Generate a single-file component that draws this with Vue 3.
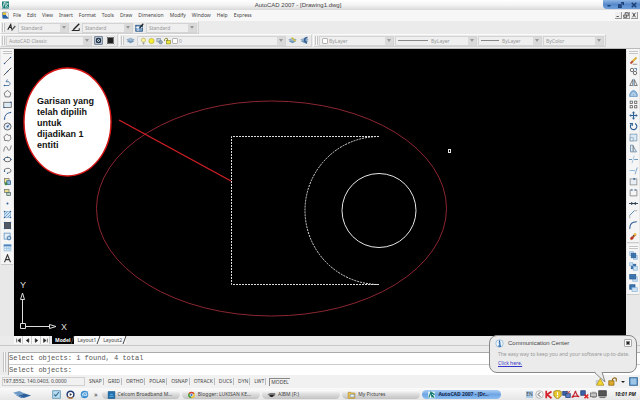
<script setup>
const menus = ['File', 'Edit', 'View', 'Insert', 'Format', 'Tools', 'Draw', 'Dimension', 'Modify', 'Window', 'Help', 'Express']

const blue = '#2d5f96'
const sky = '#8db8dc'
const ink = '#555'

const line = (d, c = ink, w = 1) => `<path d="${d}" fill="none" stroke="${c}" stroke-width="${w}"/>`
const box = (x, y, w, h, f = 'none', s = ink) => `<rect x="${x}" y="${y}" width="${w}" height="${h}" fill="${f}" stroke="${s}"/>`
const dot = (x, y, c = blue, r = 1) => `<circle cx="${x}" cy="${y}" r="${r}" fill="${c}"/>`

const drawTools = [
  { name: 'Line', art: line('M2 10 10 2') + dot(2, 10) + dot(10, 2) },
  { name: 'Construction Line', art: line('M1 11 11 1', ink, 1.3) + dot(6, 6) },
  { name: 'Polyline', art: line('M1 10H8A3 3 0 0 0 8 5H4L6 2', blue) + dot(2, 10) },
  { name: 'Polygon', art: line('M6 2 10.5 5.5 9 10.5H3L1.500 5.500Z') },
  { name: 'Rectangle', art: box(1, 3, 10, 7, '#dbe9f5') + dot(1.5, 10) + dot(10.5, 3) },
  { name: 'Arc', art: line('M2 11Q2 3 10 2', blue, 1.2) + dot(2, 10.5) + dot(10, 2) },
  { name: 'Circle', art: '<circle cx="6" cy="6" r="4.700" fill="#e4edf5" stroke="#444"/>' + line('M6 6 9 3', blue) + dot(6, 6, blue, 1.4) },
  { name: 'Revision Cloud', art: line('M3 3Q5 0 7 3Q11 2 10 5Q12 8 9 9Q8 12 5 10Q1 11 2 8Q0 5 3 3Z') },
  { name: 'Spline', art: line('M1 10C2 1 5 3 6 6S9 11 11 2') },
  { name: 'Ellipse', art: '<ellipse cx="6" cy="6" rx="4.600" ry="3" fill="none" stroke="#444"/>' + dot(1.5, 6) + dot(10.5, 6) + dot(6, 3) },
  { name: 'Ellipse Arc', art: line('M2 7A4.500 3 0 1 1 7 9') + dot(2, 7) + dot(6, 9.5) },
  { name: 'Insert Block', art: box(2, 2, 6, 6, '#f2e58a', '#777') + box(5, 5, 5, 5, sky, blue) + dot(4, 9, '#3f8a45', 2) },
  { name: 'Make Block', art: box(2, 2, 6, 4, '#e6dc88', '#777') + box(5, 6, 5, 4, '#b9d6b5', '#567') },
  { name: 'Point', art: dot(6, 6, blue, 1.3) },
  { name: 'Hatch', art: box(2, 2, 8, 8, '#cfe2f2', sky) + line('M2 6 6 2M2 10 10 2M6 10 10 6', '#5c8fc0') + dot(2, 2) + dot(10, 2) + dot(2, 10) + dot(10, 10) },
  { name: 'Gradient', art: box(2, 2, 8, 8, '#505a68', '#333') + dot(2, 2) + dot(10, 2) + dot(2, 10) + dot(10, 10) },
  { name: 'Region', art: box(1.5, 1.5, 8, 8, '#e3eef8', '#5c8fc0') + '<circle cx="8" cy="8" r="2.500" fill="#bcd6ea" stroke="#2d5f96"/>' },
  { name: 'Table', art: box(1.5, 2.5, 9, 8, '#eaf3fb', sky) + '<rect x="1" y="2" width="10" height="2.500" fill="#4d86bd"/>' + line('M2 7H10M5 4V10M8 4V10', sky) },
  { name: 'Multiline Text', art: line('M2 11 6 1 10 11M3.500 7.500H8.500', '#333', 1.4) }
]

const modifyTools = [
  { name: 'Erase', art: line('M4 8 10 2', '#d8b13c', 2.6) + line('M2 10 5 7', '#c24a3a', 2.4) + line('M5 11H11', '#777') },
  { name: 'Copy', art: '<circle cx="4" cy="4" r="2.300" fill="none" stroke="#444"/><circle cx="8" cy="8" r="2.300" fill="none" stroke="#444"/>' + line('M7 2H10V5', blue) },
  { name: 'Mirror', art: line('M5 2V10H1ZM7 2V10H11Z', ink) + line('M6 1V11', sky) },
  { name: 'Offset', art: '<path d="M1 10V7Q3 2 6 2T11 7V10Z" fill="#8db8dc" stroke="#5c8fc0"/>' + line('M4 10V7Q6 3 8 7V10', '#eee') },
  { name: 'Array', art: box(1.5, 1.5, 3, 3) + box(7.5, 1.5, 3, 3) + box(1.5, 7.5, 3, 3) + box(7.5, 7.5, 3, 3) },
  { name: 'Move', art: line('M6 1V11M1 6H11', blue, 1.5) + line('M4.500 3 6 1 7.500 3M4.500 9 6 11 7.500 9M3 4.500 1 6 3 7.500M9 4.500 11 6 9 7.500', blue) },
  { name: 'Rotate', art: line('M3 3A4.300 4.300 0 1 0 8 2M1 2H4.500V5', blue, 1.5) },
  { name: 'Scale', art: box(1.5, 1.5, 9, 9, '#dceaf5', '#7a99b5') + box(1.5, 6.5, 4, 4, '#f8f8f8', '#7a99b5') },
  { name: 'Stretch', art: '<path d="M2 1.500H5L10 10.500H2Z" fill="#dceaf5" stroke="#60809c"/>' + line('M5.500 2V10') },
  { name: 'Trim', art: line('M7 1 4 11', sky) + line('M0 6H4M7 6H12', '#6c93b8', 1.3) },
  { name: 'Extend', art: line('M11 2 8 11', '#5c8fc0') + line('M1 6H8', sky, 1.3) },
  { name: 'Break at Point', art: box(1.5, 2.5, 9, 8, '#e8eef3', '#888') + dot(7, 2.5, blue, 1.3) },
  { name: 'Break', art: line('M4 2.500H1.500V10.500H10.500V2.500H8', '#777') + dot(4, 2.5) + dot(8, 2.5) },
  { name: 'Join', art: line('M0 6H12', '#345', 1.3) + line('M3 4 5 6 3 8M9 4 7 6 9 8', '#234', 1.3) },
  { name: 'Chamfer', art: line('M1 11V7L7 1H11', '#999') + line('M1 7 7 1', '#5c8fc0', 1.3) },
  { name: 'Fillet', art: line('M1 11V9M9 1H11', '#999') + line('M1 10Q1 1 10 1', blue, 1.5) },
  { name: 'Explode', art: line('M2 10 9 3', '#d66f35', 2.5) + dot(4, 8, '#b6342b', 2) + dot(8, 3, '#e5bf4d', 1.8) + dot(6, 5, '#345', 1) }
]

const orderTools = [
  { name: 'Bring to Front', art: box(1, 1, 5, 5, '#cfe2f2', sky) + box(6, 6, 5, 5, '#cfe2f2', sky) + box(3, 3, 6, 6, '#3b73ac', blue) },
  { name: 'Send to Back', art: box(3, 3, 6, 6, '#3b73ac', blue) + box(1, 1, 4, 4, '#cfe2f2', sky) + box(6, 6, 5, 5, '#cfe2f2', sky) },
  { name: 'Bring Above Objects', art: box(5, 5, 6, 6, '#cfe2f2', sky) + box(1, 2, 8, 6, '#3b73ac', blue) },
  { name: 'Send Under Objects', art: box(1, 1, 7, 6, '#3b73ac', blue) + box(4, 5, 7, 5, '#cfe2f2', sky) }
]

const styleCombos = [
  { name: 'Text style', art: line('M1 9 5 2 6 8M3 6H6', '#222', 1.5) + line('M6 10 11 4', '#555', 1.7) },
  { name: 'Dimension style', art: line('M1 10H11V7', '#222', 1.3) + line('M3 9 11 1', '#222', 2) },
  { name: 'Table style', art: box(1, 3, 9, 8, '#7aa3cd', '#24507f') + line('M1 6H10M4 4V11', '#fff') + line('M6 7 11 1', '#222', 1.6) }
]

const layers = '<path d="M1 7 6 5 11 7 6 9.500Z" fill="#7298bd"/><path d="M1 5 6 3 11 5 6 7.500Z" fill="#9dbad4" stroke="#557799" stroke-width=".5"/>'
const art = {
  gear: box(1, 1, 10, 10, '#c6d4e4', '#456') + '<circle cx="6" cy="6" r="2.800" fill="none" stroke="#234" stroke-width="1.500"/>' + line('M3 3 9 9M9 3 3 9', '#345'),
  space: box(2.5, 2.5, 7, 7, '#222', '#222') + line('M1 1 3 3M11 1 9 3M1 11 3 9M11 11 9 9', '#555'),
  layers,
  layerState: layers + line('M5 2 10 7', '#d5c43d', 2),
  layerPrev: layers + line('M10 2A4 4 0 0 0 6 6L9 10', '#315f91', 2),
  bulb: '<circle cx="6" cy="4.500" r="3.500" fill="#fff7a0" stroke="#a59b42"/>' + line('M4.500 9.500H7.500M5 11H7', '#555'),
  sun: '<circle cx="6" cy="6" r="4.500" fill="#f5ee36" stroke="#aaa13a"/>',
  freeze: box(1.5, 1.5, 6, 6, '#c2cfda', '#789') + '<circle cx="8" cy="8" r="3" fill="#93a9bb" stroke="#678"/>',
  lock: box(4, 5, 7, 6, '#e9e33a', '#888527') + line('M1 6V3Q3 0 6 2V6', '#888527', 1.5),
  swatch: box(1.5, 1.5, 9, 9, '#fff', '#777')
}

const lineCombos = [
  { name: 'Color', text: 'ByLayer', kind: 'color', cls: 'w-color' },
  { name: 'Linetype', text: 'ByLayer', kind: 'long', cls: 'w-type' },
  { name: 'Lineweight', text: 'ByLayer', kind: 'short', cls: 'w-weight' },
  { name: 'Plot style', text: 'ByColor', kind: '', cls: 'w-plot' }
]

const note = ['Garisan yang', 'telah dipilih', 'untuk', 'dijadikan 1', 'entiti']
const tabNav = [
  { name: 'First', d: 'M1 1V7M7 1V7L3 4Z' },
  { name: 'Previous', d: 'M6 1V7L2 4Z' },
  { name: 'Next', d: 'M2 1V7L6 4Z' },
  { name: 'Last', d: 'M7 1V7M1 1V7L5 4Z' }
]
const toggles = ['SNAP', 'GRID', 'ORTHO', 'POLAR', 'OSNAP', 'OTRACK', 'DUCS', 'DYN', 'LWT', 'MODEL']

const ie = '<circle cx="6" cy="6" r="5" fill="#3d8fd0"/><path d="M9 7H3.500A2.700 2.700 0 1 1 9 6Z" fill="none" stroke="#fff" stroke-width="1.200"/><path d="M1 10Q7 6 11 1" fill="none" stroke="#7fc0ec" stroke-width="1.300"/>'
const quick = [
  { name: 'Show Desktop', art: box(1, 1, 10, 10, '#b9dcf0', '#4b88ad') + line('M3 6 5 8 9 3', '#2f6488', 1.5) },
  { name: 'Media Player', art: '<circle cx="6" cy="6" r="4.500" fill="#fff" stroke="#263c78" stroke-width="2"/><path d="M5 4 8 6 5 8Z" fill="#333"/><path d="M2 9A5 5 0 0 0 9 10" fill="none" stroke="#d9832e" stroke-width="1.500"/>' },
  { name: 'Internet Explorer', art: ie }
]
const tasks = [
  { text: 'Celcom Broadband M...', art: box(1, 1, 10, 10, '#1f6fae', '#15588f') + line('M3 8H9M4 5H8', '#8fd0f5') },
  { text: 'Blogger: LUKISAN KE...', art: '<circle cx="6" cy="6" r="5" fill="#e8c22e"/><path d="M6 6 1.700 3.500A5 5 0 0 1 10.300 3.500Z" fill="#d63a2e"/><path d="M6 6 1.700 3.500A5 5 0 0 0 5.500 11Z" fill="#3a9a48"/><circle cx="6" cy="6" r="2.200" fill="#3b78d0" stroke="#fff"/>' },
  { text: 'AIBM (F:)', art: '<path d="M0 5 4 3H11L12 6 8 9H4Z" fill="#777"/><path d="M3 6H10L7 9H5Z" fill="#222"/>' },
  { text: 'My Pictures', art: '<path d="M1 2H5L6 3H11V11H1Z" fill="#efc64f" stroke="#b38a2b"/><path d="M4 5H10V9H4Z" fill="#f6f6f6" stroke="#6b8fb5"/>' },
  { text: 'AutoCAD 2007 - [Dr...', active: true, art: '<path d="M1 1H11V11H1Z" fill="#e5f6f3"/>' + line('M2 10 5 2 7 10M6 2 10 5 7 7 10 10', '#11756c', 1.6) }
]
const tray = [
  { name: 'Show icons', art: '<circle cx="6" cy="6" r="5" fill="#f4f4f4" stroke="#aaa"/>' + line('M7 3 4 6 7 9', '#555', 1.3) },
  { name: 'Antivirus', art: line('M3 1V11M10 2 4 6 10 11', '#d4202a', 2.3) },
  { name: 'Security', art: '<path d="M6 0 11 2V7Q10 10 6 12 2 10 1 7V2Z" fill="#e7c72f" stroke="#947e20"/>' + line('M6 3V7M6 8V10', '#fff', 1.5) },
  { name: 'Network', art: box(1, 2, 6, 5, '#3d62a8', '#223e74') + box(5, 5, 6, 5, '#5a7fc0', '#223e74') + line('M7 1 11 5M11 1 7 5', '#c33') },
  { name: 'Reader', art: line('M1 10Q5 6 6 1Q7 7 11 9Q6 7 1 10', '#c4222c', 1.6) },
  { name: 'Connection', art: box(1, 1, 6, 6, '#3d62a8', '#223e74') + line('M6 6 11 11M11 6 6 11', '#d22', 2) },
  { name: 'Hardware', art: box(2, 4, 8, 5, '#c5c5c5', '#666') + line('M4 3H9M4 10H9', '#888') },
  { name: 'Display', art: box(1, 1, 10, 7, '#555', '#333') + line('M2 10H10', '#777', 1.5) }
]
</script>

<template>
  <div class="app">
    <header class="title-bar">
      <svg class="app-icon" viewBox="0 0 12 12"><rect width="12" height="12" fill="#167b74" /><path d="M1 11 4 1 7 11M5 2 11 4 7 6 11 11" fill="none" stroke="#e4f5f2" stroke-width="1.3" /></svg>
      <h1>AutoCAD 2007 - [Drawing1.dwg]</h1>
      <div class="window-buttons">
        <button aria-label="Minimize"><svg viewBox="0 0 8 8"><path d="M2 5H6" /></svg></button>
        <button aria-label="Restore"><svg viewBox="0 0 8 8"><path d="M1 4H4V7H1ZM4 1H7V4" /></svg></button>
        <button aria-label="Close"><svg viewBox="0 0 8 8"><path d="M1 1 7 7M7 1 1 7" /></svg></button>
      </div>
    </header>

    <nav class="menu-bar">
      <svg class="doc-icon" viewBox="0 0 12 12"><path d="M2 0H9L11 2V11H2Z" fill="#f3f3f3" stroke="#999" /><path d="M0 1H7V6L12 11H1Z" fill="#2864a8" /><path d="M1 1H7V5H1Z" fill="#eec43a" /></svg>
      <button v-for="m in menus" :key="m">{{ m }}</button>
      <div class="doc-buttons">
        <button aria-label="Minimize drawing"><svg viewBox="0 0 8 8"><path d="M2 6H5" /></svg></button>
        <button aria-label="Restore drawing"><svg viewBox="0 0 8 8"><path d="M1 4H5V7H1ZM3 3V1H7V5H6" /></svg></button>
        <button aria-label="Close drawing"><svg viewBox="0 0 8 8"><path d="M2 1 6 7M6 1 2 7" /></svg></button>
      </div>
    </nav>

    <div class="toolbar styles">
      <div class="group">
        <i class="grip"></i>
        <template v-for="c in styleCombos" :key="c.name">
          <button class="tool" :aria-label="c.name"><svg viewBox="0 0 12 12" v-html="c.art" /></button>
          <div class="combo w-style">
            <select :aria-label="c.name"><option>Standard</option></select>
            <i class="arrow"></i>
          </div>
        </template>
      </div>
    </div>

    <div class="toolbar properties">
      <div class="group">
        <i class="grip"></i>
        <div class="combo w-space">
          <select aria-label="Workspace"><option>AutoCAD Classic</option></select>
          <i class="arrow"></i>
        </div>
        <button class="tool" aria-label="Workspace settings"><svg viewBox="0 0 12 12" v-html="art.gear" /></button>
        <button class="tool" aria-label="My workspace"><svg viewBox="0 0 12 12" v-html="art.space" /></button>
      </div>
      <div class="group">
        <i class="grip"></i>
        <button class="tool" aria-label="Layer properties"><svg viewBox="0 0 12 12" v-html="art.layers" /></button>
        <div class="combo w-layer">
          <svg viewBox="0 0 12 12" v-html="art.bulb" />
          <svg viewBox="0 0 12 12" v-html="art.sun" />
          <svg viewBox="0 0 12 12" v-html="art.freeze" />
          <svg viewBox="0 0 12 12" v-html="art.lock" />
          <svg class="small" viewBox="0 0 12 12" v-html="art.swatch" />
          <select aria-label="Layer"><option>0</option></select>
          <i class="arrow"></i>
        </div>
        <button class="tool" aria-label="Make object's layer current"><svg viewBox="0 0 12 12" v-html="art.layerState" /></button>
        <button class="tool" aria-label="Layer previous"><svg viewBox="0 0 12 12" v-html="art.layerPrev" /></button>
      </div>
      <div class="group">
        <i class="grip"></i>
        <div v-for="c in lineCombos" :key="c.name" class="combo" :class="c.cls">
          <svg v-if="c.kind === 'color'" class="small" viewBox="0 0 12 12" v-html="art.swatch" />
          <i v-else-if="c.kind" class="sample" :class="c.kind"></i>
          <select :aria-label="c.name"><option>{{ c.text }}</option></select>
          <i class="arrow"></i>
        </div>
      </div>
    </div>

    <main class="workspace">
      <aside class="rail">
        <div class="palette">
          <i class="grip flat"></i>
          <button v-for="t in drawTools" :key="t.name" :aria-label="t.name"><svg viewBox="0 0 12 12" v-html="t.art" /></button>
        </div>
      </aside>

      <div class="canvas">
        <svg viewBox="14 49 612 287" preserveAspectRatio="xMinYMin meet">
          <ellipse cx="271.5" cy="208.5" rx="175" ry="107.5" class="outline" />
          <path d="M379 136.5H231.5V284.5H379" class="picked" />
          <path d="M379 136.5A74 74 0 0 0 379 284.5" class="picked" />
          <circle cx="379" cy="210.500" r="37" class="solid" />
          <path d="M119 120 231 181" class="leader" />
          <ellipse cx="67.500" cy="122" rx="43.500" ry="54" class="callout" />
          <text v-for="(t, i) in note" :key="t" x="37" :y="104 + i * 11" class="note">{{ t }}</text>
          <rect x="448.5" y="149.5" width="2" height="3" class="solid" />
          <g class="axes">
            <path d="M20.500 323.500H25.500V328.500H20.500ZM25.500 326.500H49.500M22.500 323.500V299.500M49.500 324.500 56 326.500 49.500 328.500ZM20.500 299.500 22.500 293 24.500 299.500Z" />
            <text x="61" y="330">X</text>
            <text x="20" y="288">Y</text>
          </g>
        </svg>
      </div>

      <aside class="rail">
        <div class="palette">
          <i class="grip flat"></i>
          <button v-for="t in modifyTools" :key="t.name" :aria-label="t.name"><svg viewBox="0 0 12 12" v-html="t.art" /></button>
        </div>
        <div class="palette">
          <i class="grip flat"></i>
          <button v-for="t in orderTools" :key="t.name" :aria-label="t.name"><svg viewBox="0 0 12 12" v-html="t.art" /></button>
        </div>
      </aside>
    </main>

    <div class="layout-tabs">
      <button v-for="n in tabNav" :key="n.name" class="tab-nav" :aria-label="n.name"><svg viewBox="0 0 8 8"><path :d="n.d" /></svg></button>
      <button class="tab current">Model</button>
      <button class="tab">Layout1</button>
      <button class="tab">Layout2</button>
    </div>

    <section class="command">
      <i class="grip"></i>
      <div class="lines">
        <p>Select objects: 1 found, 4 total</p>
        <div class="prompt">
          <label for="cmd">Select objects:</label>
          <input id="cmd" type="text" />
        </div>
      </div>
    </section>

    <footer class="status">
      <output class="coords">197.8552, 140.0403, 0.0000</output>
      <button v-for="t in toggles" :key="t" :class="{ on: t === 'MODEL' }">{{ t }}</button>
      <div class="status-icons">
        <svg viewBox="0 0 12 12"><path d="M1 4H8V10H1Z" fill="#c6ccd3" /><path d="M7 2 12 11H2Z" fill="#f2d52e" stroke="#ab9021" /></svg>
        <svg viewBox="0 0 12 12"><path d="M1 5H8V11H1Z" fill="#dca92d" stroke="#8e6814" /><path d="M6 5V3Q8 0 11 2V6" fill="none" stroke="#8e6814" stroke-width="1.500" /></svg>
        <i class="caret"></i>
        <svg viewBox="0 0 12 12"><path d="M1 1H11V11H1Z" fill="#9cc5e6" stroke="#2b6196" stroke-width="1.500" /></svg>
      </div>

      <section class="balloon">
        <header>
          <svg viewBox="0 0 12 12"><circle cx="6" cy="6" r="5" fill="#e9f2fa" stroke="#8fb3d2" /><path d="M6 2V4M5 5H6.500V9M4.500 9.500H8" fill="none" stroke="#1d5fa6" stroke-width="1.500" /></svg>
          <h2>Communication Center</h2>
          <button aria-label="Close"><svg viewBox="0 0 8 8"><path d="M2 2 6 6M6 2 2 6" /></svg></button>
        </header>
        <p>The easy way to keep you and your software up-to-date.</p>
        <a href="#">Click here.</a>
        <svg class="tail" viewBox="0 0 12 12"><path d="M0 0 11 11 8 0Z" fill="#ebebeb" /><path d="M0 1 11 11 8 1" fill="none" stroke="#888" /></svg>
      </section>
    </footer>

    <div class="taskbar">
      <button class="start" aria-label="Start"><svg viewBox="0 0 20 10"><path d="M0 3 7 1 13 4 6 6Z" fill="#6c98c6" /><path d="M6 6 13 4 20 6 12 9Z" fill="#2a5f9c" /><path d="M2 5 6 6 12 9 9 9Z" fill="#3f77b2" /></svg></button>
      <button v-for="q in quick" :key="q.name" class="quick" :aria-label="q.name"><svg viewBox="0 0 12 12" v-html="q.art" /></button>
      <span class="more">»</span>
      <div class="tasks">
        <button v-for="t in tasks" :key="t.text" class="task" :class="{ active: t.active }">
          <svg viewBox="0 0 12 12" v-html="t.art" />
          <span>{{ t.text }}</span>
        </button>
      </div>
      <div class="tray">
        <span class="lang">EN</span>
        <svg v-for="t in tray" :key="t.name" viewBox="0 0 12 12" v-html="t.art" />
        <time>10:01 PM</time>
      </div>
    </div>
  </div>
</template>

<style>
body {
  margin: 0;
  background: #ebebeb;
}
</style>

<style scoped>
* {
  box-sizing: border-box;
}

.app {
  display: flex;
  flex-direction: column;
  min-height: 100vh;
  background: #ebebeb;
  color: #444;
  font: 5px/7px "Noto Sans", "Liberation Sans", sans-serif;
}

button,
select,
input {
  margin: 0;
  padding: 0;
  border: 0;
  border-radius: 0;
  background: none;
  color: inherit;
  font: inherit;
}

svg {
  display: block;
  flex: none;
  width: 9px;
  height: 9px;
}

h1,
h2,
p {
  margin: 0;
  font-weight: normal;
}

.title-bar {
  display: flex;
  align-items: center;
  height: 10px;
  padding-left: 2px;
  background: linear-gradient(#fff, #f4f4f4 50%, #d8d8d8);
}

.app-icon {
  width: 7px;
  height: 8px;
}

h1 {
  flex: 1;
  padding-right: 16px;
  text-align: center;
  font: 6px/10px "Liberation Sans", sans-serif;
}

.window-buttons {
  display: flex;
  align-items: center;
  justify-content: space-around;
  width: 37px;
  height: 9px;
  align-self: flex-start;
  border-bottom-left-radius: 4px;
  background: linear-gradient(#8fb6e4, #5688ca 50%, #6fa0dc);
}

.window-buttons svg,
.doc-buttons svg,
.balloon button svg {
  width: 6px;
  height: 6px;
  fill: none;
  stroke: #1c3f74;
  stroke-width: 2;
}

.menu-bar {
  display: flex;
  align-items: center;
  gap: 6px;
  height: 11px;
  padding: 0 2px;
  background: #f7f7f7;
}

.doc-icon {
  width: 7px;
}

.menu-bar > .doc-icon {
  margin-right: -2px;
}

.doc-buttons {
  display: flex;
  gap: 1px;
  margin-left: auto;
}

.doc-buttons button {
  border-right: 1px solid #999;
  border-bottom: 1px solid #999;
  background: #eee;
}

.doc-buttons svg {
  stroke: #222;
  stroke-width: 1;
}

.toolbar {
  display: flex;
  align-items: stretch;
  gap: 1px;
  color: #999;
}

.styles {
  height: 13px;
}

.properties {
  height: 15px;
  padding-bottom: 1px;
  border-bottom: 1px solid #bbb;
}

.group {
  display: flex;
  align-items: center;
  gap: 1px;
  padding: 0 1px;
  border: 1px solid #d2d2d2;
  border-top-color: #fbfbfb;
  border-left-color: #fbfbfb;
}

.grip {
  flex: none;
  width: 3px;
  height: 9px;
  border: 1px solid #c4c4c4;
  border-width: 0 1px;
  background: #fafafa;
}

.grip.flat {
  width: 9px;
  height: 3px;
  margin: 2px 0 1px;
  border-width: 1px 0;
}

.tool {
  width: 11px;
}

.tool svg {
  margin: 0 auto;
}

.combo {
  display: flex;
  align-items: center;
  gap: 1px;
  height: 10px;
  padding-left: 2px;
  border: 1px solid #d4d4d4;
  background: #efefef;
}

.combo select {
  flex: 1;
  min-width: 0;
  appearance: none;
  line-height: 8px;
}

.combo svg {
  width: 7px;
  height: 8px;
}

.combo svg.small {
  width: 6px;
  height: 6px;
}

.arrow {
  display: grid;
  place-items: center;
  width: 8px;
  height: 8px;
  background: #dadada;
}

.arrow::after {
  content: "";
  border: 2px solid transparent;
  border-top: 3px solid #999;
  border-bottom: 0;
}

.w-style { width: 51px; }
.w-space { width: 86px; }
.w-layer { width: 149px; }
.w-color { width: 75px; }
.w-type { width: 82px; }
.w-weight { width: 64px; }
.w-plot { width: 61px; }

.sample {
  height: 1px;
  margin-right: 2px;
  background: #888;
}

.sample.long { width: 30px; }
.sample.short { width: 18px; }

.workspace {
  display: flex;
  flex: 1;
}

.rail {
  display: flex;
  flex-direction: column;
  gap: 1px;
  width: 14px;
  background: #e8e8e8;
}

.palette {
  display: flex;
  flex-direction: column;
  align-items: center;
  margin: 0 1px;
  border-bottom: 1px solid #ccc;
  background: #f5f5f5;
}

.palette button {
  display: grid;
  place-items: center;
  height: 11px;
}

.canvas {
  flex: 1;
  background: #000;
}

.canvas svg {
  width: 100%;
  height: auto;
}

.canvas path,
.canvas circle,
.canvas rect,
.canvas ellipse {
  fill: none;
  stroke-width: 1;
}

.canvas .outline { stroke: #8c2630; }
.canvas .picked { stroke: #dcdcdc; stroke-dasharray: 2 1; }
.canvas .solid { stroke: #e6e6e6; }
.canvas .leader { stroke: #cf1f26; stroke-width: 1.4; }
.canvas .callout { fill: #fff; stroke: #d81515; stroke-width: 1.4; }

.note {
  fill: #111;
  font: bold 9px "Liberation Sans", sans-serif;
}

.axes path { stroke: #ddd; }

.axes text {
  fill: #ddd;
  font: 9px "Liberation Sans", sans-serif;
}

.layout-tabs {
  display: flex;
  align-items: flex-start;
  height: 10px;
  padding-left: 14px;
  border-bottom: 1px solid #c8c8c8;
}

.tab-nav {
  display: grid;
  place-items: center;
  width: 9px;
  height: 8px;
  border-right: 1px solid #ccc;
  background: #f8f8f8;
}

.tab-nav svg {
  width: 5px;
  height: 5px;
  fill: #222;
  stroke: #222;
}

.tab {
  display: flex;
  height: 8px;
  padding-left: 3px;
  background: #f8f8f8;
  line-height: 8px;
}

.tab::after {
  content: "";
  width: 1px;
  height: 8px;
  margin: 0 1px 0 2px;
  background: #444;
  transform: skewX(-20deg);
}

.tab.current {
  margin-left: 2px;
  background: #000;
  color: #fff;
  font-weight: bold;
}

.command {
  display: flex;
  gap: 2px;
  padding: 6px 0 0 3px;
}

.command .grip {
  height: 20px;
}

.lines {
  flex: 1;
  border: 1px solid #aaa;
  border-width: 1px 0 0 1px;
  background: #fff;
  color: #555;
  font: 7px/10px "Liberation Mono", monospace;
}

.lines p {
  height: 12px;
  border-bottom: 1px solid #ccc;
}

.prompt {
  display: flex;
  height: 10px;
}

.prompt input {
  flex: 1;
  outline: 0;
}

.status {
  position: relative;
  display: flex;
  align-items: center;
  gap: 3px;
  height: 13px;
  padding: 0 2px;
  background: #f1f1f1;
}

.coords {
  width: 83px;
  border: 1px solid #d0d0d0;
}

.status > button {
  padding: 0 1px;
  border-right: 1px solid #bbb;
}

.status > button.on {
  border: 1px solid #888;
  border-width: 1px 0 0 1px;
}

.status-icons {
  display: flex;
  align-items: center;
  gap: 4px;
  margin-left: auto;
}

.caret {
  border: 2px solid transparent;
  border-top-color: #222;
  border-bottom: 0;
}

.balloon {
  position: absolute;
  right: 3px;
  bottom: 15px;
  width: 148px;
  height: 38px;
  padding: 2px 4px 0 8px;
  border: 1px solid #888;
  border-radius: 8px;
  background: #ebebeb;
  color: #999;
}

.balloon header {
  display: flex;
  align-items: center;
  gap: 4px;
  margin-left: -3px;
  height: 10px;
}

.balloon h2 {
  flex: 1;
  color: #444;
  font: 6px/9px "Liberation Sans", sans-serif;
}

.balloon button {
  border: 1px solid #aaa;
  border-radius: 1px;
  background: #f8f8f8;
}

.balloon button svg {
  stroke: #222;
}

.balloon p {
  margin: 3px 0 2px;
  white-space: nowrap;
}

.balloon a {
  display: block;
  color: #3434c8;
}

.tail {
  position: absolute;
  right: 30px;
  top: 35px;
  width: 12px;
  height: 12px;
}

.taskbar {
  display: flex;
  align-items: center;
  height: 13px;
  padding-right: 4px;
  background: linear-gradient(#fafafa, #e4e4e4);
}

.start {
  margin: 0 20px 0 12px;
}

.start svg {
  width: 20px;
  height: 9px;
}

.quick {
  width: 14px;
}

.more {
  margin-right: 4px;
  font-size: 7px;
}

.tasks {
  display: flex;
  gap: 2px;
  width: 399px;
}

.task {
  display: flex;
  flex: 1;
  align-items: center;
  gap: 2px;
  min-width: 0;
  height: 9px;
  padding: 0 5px;
  border-radius: 5px;
  background: linear-gradient(#fdfdfd, #dedede 45%, #c2c2c2);
  white-space: nowrap;
}

.task svg {
  height: 8px;
}

.task.active {
  background: linear-gradient(#a9cdf3, #6ea5e4 50%, #8cbdf0);
  color: #16294a;
  font-weight: bold;
}

.tray {
  display: flex;
  align-items: center;
  margin-left: auto;
}

.lang {
  margin-right: 2px;
  background: #a9cbe8;
}

time {
  margin-left: 8px;
  color: #222;
  font-style: italic;
  font-weight: bold;
}
</style>
